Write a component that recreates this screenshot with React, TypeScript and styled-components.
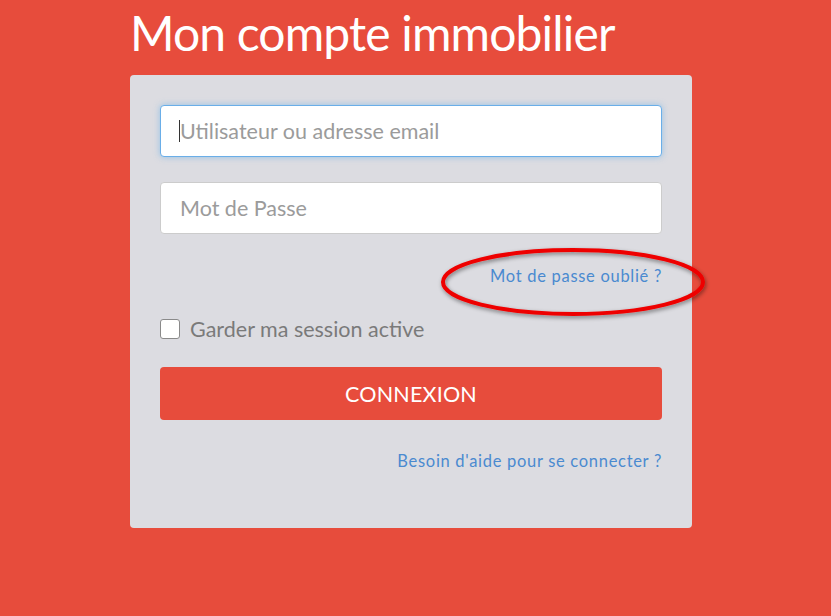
import React from 'react';
import styled, { createGlobalStyle } from 'styled-components';

const GlobalStyle = createGlobalStyle`
    html, body {
        margin: 0;
        padding: 0;
        background: #e74c3c;
        font-family: Lato, "Open Sans", sans-serif;
    }
    * {
        box-sizing: border-box;
    }
`;

const Page = styled.div`
    position: relative;
    width: 831px;
    height: 616px;
    overflow: hidden;
    background: #e74c3c;
`;

const Column = styled.div`
    width: 562px;
    margin-left: 130px;
`;

const Title = styled.h1`
    margin: 0;
    height: 75px;
    padding-top: 3px;
    font-size: 48px;
    line-height: 60px;
    font-weight: 400;
    color: #ffffff;
    letter-spacing: -0.85px;
    white-space: nowrap;
`;

const Card = styled.div`
    background: #dcdce1;
    border-radius: 4px;
    padding: 30px 30px 0;
    height: 453px;
    display: flex;
    flex-direction: column;
`;

const Field = styled.div<{ $last?: boolean }>`
    position: relative;
    margin-bottom: ${props => (props.$last ? '0' : '25px')};
`;

const Input = styled.input<{ $focused?: boolean }>`
    display: block;
    width: 100%;
    height: 52px;
    padding: 0 19px;
    border-radius: 4px;
    border: 1px solid ${props => (props.$focused ? '#6aaee8' : '#cccccc')};
    box-shadow: ${props =>
        props.$focused ? '0 0 6px rgba(102, 175, 233, 0.6)' : 'none'};
    background: #ffffff;
    font-family: Lato, sans-serif;
    font-size: 21.5px;
    color: #555;
    outline: none;

    &::placeholder {
        color: #9b9b9b;
    }
`;

const Caret = styled.span`
    position: absolute;
    left: 19px;
    top: 15px;
    width: 1px;
    height: 22px;
    background: #333;
`;

const ForgotRow = styled.div`
    display: flex;
    justify-content: flex-end;
    margin-top: 5px;
    height: 60px;
`;

const Link = styled.a<{ $offset?: number }>`
    font-size: 16.5px;
    letter-spacing: 0.7px;
    color: #4a8ad0;
    text-decoration: none;
    line-height: 18px;
    margin-top: ${props => props.$offset ?? 0}px;
`;

const CheckRow = styled.label`
    display: flex;
    align-items: center;
    gap: 10px;
    height: 24px;
    margin-top: 18px;
    font-size: 21.5px;
    color: #7a7a7a;
`;

const Box = styled.span`
    width: 20px;
    height: 20px;
    border: 1.5px solid #8a8a8a;
    border-radius: 3px;
    background: #ffffff;
`;

const Button = styled.button`
    margin-top: 26px;
    width: 100%;
    height: 53px;
    border: none;
    border-radius: 4px;
    background: #e74c3c;
    color: #ffffff;
    font-family: Lato, sans-serif;
    font-size: 21.5px;
    letter-spacing: 0.2px;
`;

const HelpRow = styled.div`
    display: flex;
    justify-content: flex-end;
    margin-top: 32px;
`;

const Annotation = styled.svg`
    position: absolute;
    left: 430px;
    top: 240px;
    overflow: visible;
`;

export default function App() {
    return (
        <Page>
            <GlobalStyle />
            <Column>
                <Title>Mon compte immobilier</Title>
                <Card>
                    <Field>
                        <Input $focused placeholder="Utilisateur ou adresse email" />
                        <Caret />
                    </Field>
                    <Field $last>
                        <Input type="password" placeholder="Mot de Passe" />
                    </Field>
                    <ForgotRow>
                        <Link href="#" $offset={28}>Mot de passe oublié ?</Link>
                    </ForgotRow>
                    <CheckRow>
                        <Box />
                        Garder ma session active
                    </CheckRow>
                    <Button>CONNEXION</Button>
                    <HelpRow>
                        <Link href="#">Besoin d'aide pour se connecter ?</Link>
                    </HelpRow>
                </Card>
            </Column>
            <Annotation width="280" height="90" viewBox="0 0 280 90">
                <defs>
                    <filter id="sh" x="-10%" y="-30%" width="120%" height="160%">
                        <feDropShadow dx="1" dy="2" stdDeviation="2" floodColor="#000" floodOpacity="0.45" />
                    </filter>
                </defs>
                <ellipse
                    cx="143"
                    cy="42"
                    rx="130"
                    ry="32"
                    fill="none"
                    stroke="#ee0000"
                    strokeWidth="4"
                    filter="url(#sh)"
                />
            </Annotation>
        </Page>
    );
}
